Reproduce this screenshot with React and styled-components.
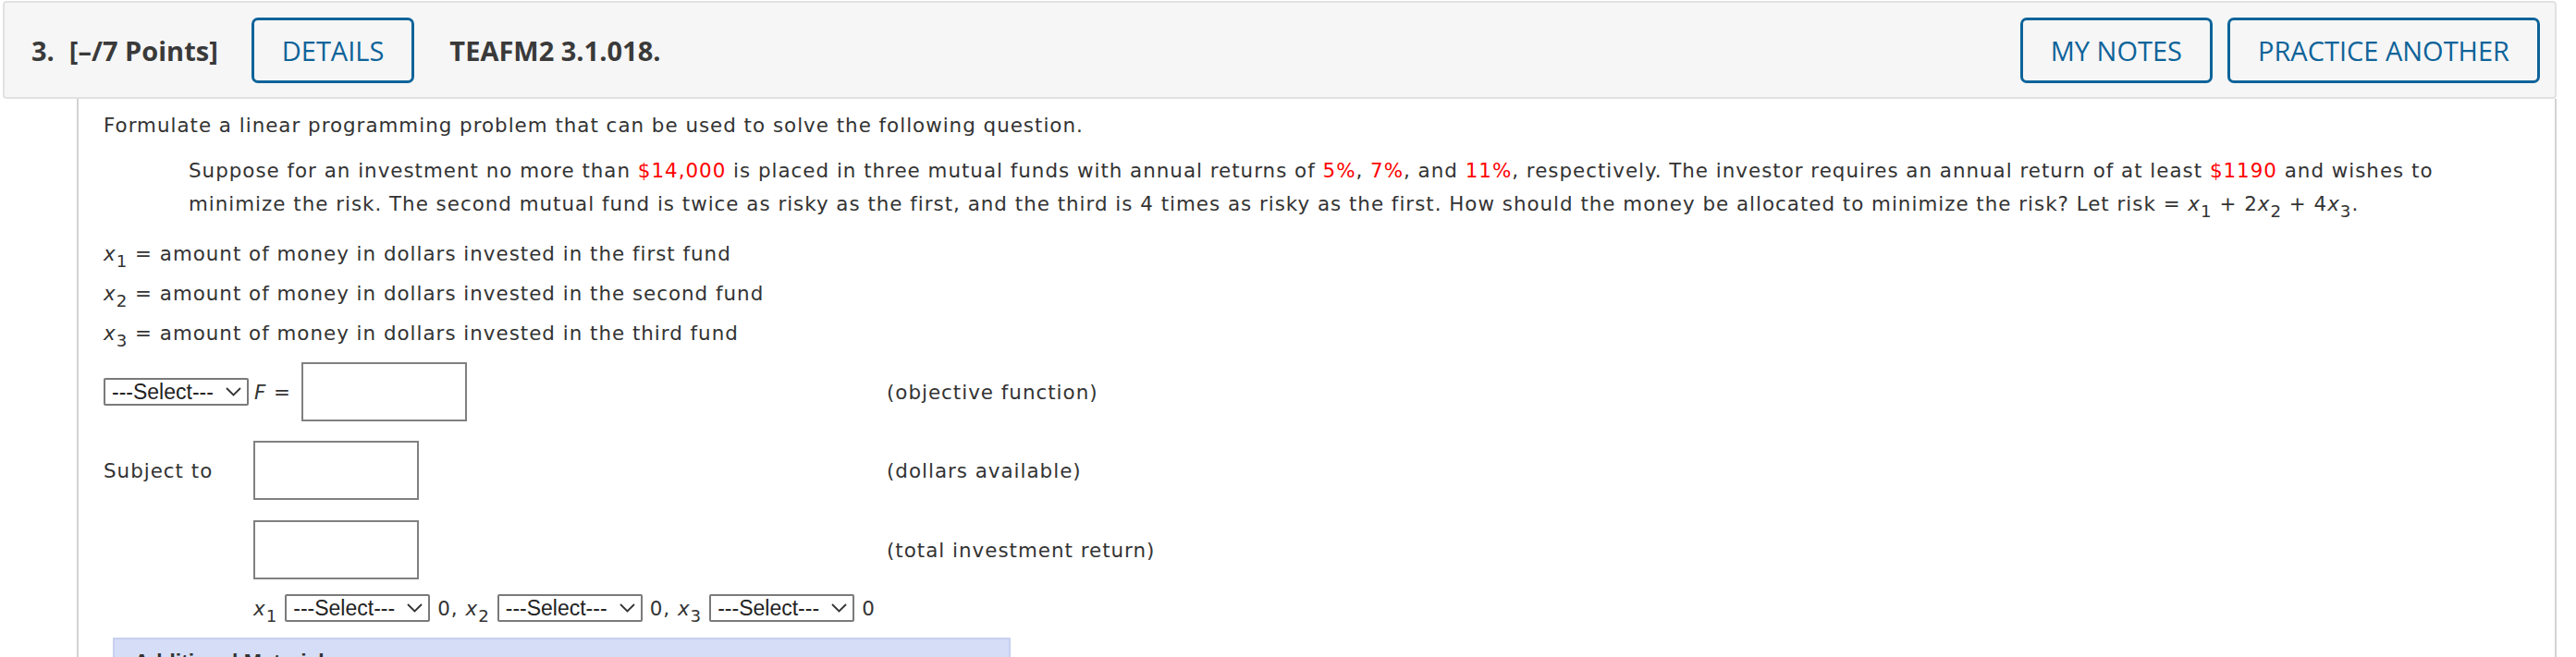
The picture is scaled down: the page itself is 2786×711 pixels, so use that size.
import React from 'react'
import styled, { createGlobalStyle } from 'styled-components'

const GlobalStyle = createGlobalStyle`
    html, body {
        margin: 0;
        padding: 0;
        background: #fff;
        overflow: hidden;
    }
    body {
        font-family: "DejaVu Sans", Verdana, sans-serif;
        color: #333;
    }
`

const Page = styled.div`
    width: 2786px;
    box-sizing: border-box;
    padding: 1px 21px 0 3px;
`

const Header = styled.header`
    display: flex;
    align-items: center;
    height: 106px;
    box-sizing: border-box;
    padding: 0 16px 0 29px;
    background: #f6f6f6;
    border: 2px solid #e2e2e2;
    border-radius: 4px;
    font-family: "Open Sans", sans-serif;
    font-size: 29px;
    color: #3a3a3a;
`

const Strong = styled.span`
    font-weight: 700;
    margin-right: ${p => p.$gap || 0}px;
`

const Spacer = styled.div`
    flex: 1;
`

const Actions = styled.div`
    display: flex;
    gap: 16px;
`

const OutlineButton = styled.button`
    height: 71px;
    padding: 0 30px;
    margin-right: ${p => p.$gap || 0}px;
    background: transparent;
    border: 3px solid #0d6399;
    border-radius: 7px;
    color: #0d6399;
    font-family: "Open Sans", sans-serif;
    font-size: 29px;
    font-weight: 400;
    cursor: pointer;
`

const Content = styled.section`
    margin-left: 80px;
    height: 640px;
    padding: 11px 0 0 27px;
    border-left: 2px solid #d2d2d2;
    border-right: 2px solid #d2d2d2;
    font-size: 21.4px;
    letter-spacing: 1px;
`

const Intro = styled.p`
    margin: 0;
    line-height: 36px;
`

const Problem = styled.p`
    margin: 13px 70px 0 92px;
    line-height: 36px;
`

const Red = styled.span`
    color: #ff0000;
`

const Definitions = styled.div`
    margin-top: 14px;
`

const DefLine = styled.div`
    line-height: 43px;
`

const Var = styled.span`
    font-style: italic;
    white-space: nowrap;
`

const Sub = styled.sub`
    font-style: normal;
    font-size: 0.85em;
    line-height: 0;
    vertical-align: -0.38em;
`

const FormRow = styled.div`
    display: grid;
    grid-template-columns: 162px 685px auto;
    align-items: center;
    margin-top: ${p => p.$top}px;
    height: ${p => p.$h}px;
`

const Cell = styled.div`
    display: flex;
    align-items: center;
    gap: ${p => p.$gap || 0}px;
    grid-column: ${p => p.$span || 'auto'};
`

const Equals = styled.span`
    margin: 0 11px 0 6px;
`

const SelectWrap = styled.span`
    position: relative;
    display: inline-block;
    height: 30px;
`

const NativeSelect = styled.select`
    appearance: none;
    width: 157px;
    height: 30px;
    box-sizing: border-box;
    padding: 0 30px 0 7px;
    border: 2px solid #7a7a7a;
    border-radius: 2px;
    background: #fff;
    color: #222;
    font-family: "Liberation Sans", Arial, sans-serif;
    font-size: 23px;
    letter-spacing: normal;
`

const Chevron = styled.svg`
    position: absolute;
    right: 8px;
    top: 10px;
    pointer-events: none;
`

const AnswerBox = styled.input`
    width: 179px;
    height: 64px;
    box-sizing: border-box;
    border: 2px solid #808080;
    background: #fff;
`

const Note = styled.span`
    white-space: nowrap;
`

const Materials = styled.div`
    margin: 17px 0 0 10px;
    width: 971px;
    height: 80px;
    box-sizing: border-box;
    padding: 12px 0 0 21px;
    background: #d6ddf6;
    border: 2px solid #c6d0f0;
    font-family: "Liberation Sans", Arial, sans-serif;
    font-size: 23px;
    font-weight: 700;
    letter-spacing: normal;
    color: #333;
`

const Select = () => (
    <SelectWrap>
        <NativeSelect defaultValue="">
            <option value="">---Select---</option>
        </NativeSelect>
        <Chevron width="17" height="10" viewBox="0 0 17 10">
            <path d="M1 1 L8.5 8.5 L16 1" fill="none" stroke="#333" strokeWidth="1.8" />
        </Chevron>
    </SelectWrap>
)

const X = ({ n }) => <Var>x<Sub>{ n }</Sub></Var>

export default function App() {
    return (
        <Page>
            <GlobalStyle />
            <Header>
                <Strong $gap={ 16 }>3.</Strong>
                <Strong $gap={ 36 }>[–/7 Points]</Strong>
                <OutlineButton $gap={ 38 }>DETAILS</OutlineButton>
                <Strong>TEAFM2 3.1.018.</Strong>
                <Spacer />
                <Actions>
                    <OutlineButton>MY NOTES</OutlineButton>
                    <OutlineButton>PRACTICE ANOTHER</OutlineButton>
                </Actions>
            </Header>
            <Content>
                <Intro>Formulate a linear programming problem that can be used to solve the following question.</Intro>
                <Problem>
                    Suppose for an investment no more than <Red>$14,000</Red> is placed in three mutual funds with annual returns of <Red>5%</Red>, <Red>7%</Red>, and <Red>11%</Red>, respectively. The investor requires an annual return of at least <Red>$1190</Red> and wishes to minimize the risk. The second mutual fund is twice as risky as the first, and the third is 4 times as risky as the first. How should the money be allocated to minimize the risk? Let risk = <X n="1" /> + 2<X n="2" /> + 4<X n="3" />.
                </Problem>
                <Definitions>
                    <DefLine><X n="1" /> = amount of money in dollars invested in the first fund</DefLine>
                    <DefLine><X n="2" /> = amount of money in dollars invested in the second fund</DefLine>
                    <DefLine><X n="3" /> = amount of money in dollars invested in the third fund</DefLine>
                </Definitions>
                <FormRow $top={ 10 } $h={ 64 }>
                    <Cell $span="1 / 3">
                        <Select />
                        <Equals><Var>F</Var> =</Equals>
                        <AnswerBox />
                    </Cell>
                    <Note>(objective function)</Note>
                </FormRow>
                <FormRow $top={ 21 } $h={ 64 }>
                    <Cell>Subject to</Cell>
                    <Cell><AnswerBox /></Cell>
                    <Note>(dollars available)</Note>
                </FormRow>
                <FormRow $top={ 22 } $h={ 64 }>
                    <Cell />
                    <Cell><AnswerBox /></Cell>
                    <Note>(total investment return)</Note>
                </FormRow>
                <FormRow $top={ 16 } $h={ 30 }>
                    <Cell />
                    <Cell $span="2 / 4" $gap={ 8 }>
                        <X n="1" /> <Select /> <span>0, <X n="2" /></span> <Select /> <span>0, <X n="3" /></span> <Select /> <span>0</span>
                    </Cell>
                </FormRow>
                <Materials>Additional Materials</Materials>
            </Content>
        </Page>
    )
}
